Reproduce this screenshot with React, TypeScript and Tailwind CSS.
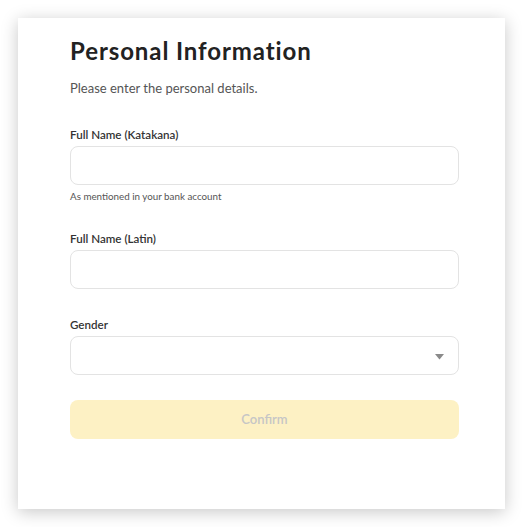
import React from "react";

function Field({ label, helper, select }: { label: string; helper?: string; select?: boolean }) {
  return (
    <div className="flex flex-col">
      <label className="text-[11.6px] leading-[16px] font-semibold text-[#333333] mb-[3px]">{label}</label>
      <div className="relative h-[39px] w-full rounded-[8px] border border-[#e3e3e3] bg-white">
        {select && (
          <svg className="absolute right-[14px] top-[17px]" width="9" height="6" viewBox="0 0 9 6">
            <path d="M0 0 L9 0 L4.5 5.5 Z" fill="#8a8a8a" />
          </svg>
        )}
      </div>
      {helper && (
        <div className="mt-[5px] text-[9.8px] leading-[12px] text-[#555555]">{helper}</div>
      )}
    </div>
  );
}

export default function App() {
  return (
    <div className="w-[525px] h-[527px] bg-white p-[18px]" style={{ fontFamily: "Lato, 'Open Sans', sans-serif" }}>
      <div className="w-[487px] h-[491px] bg-white shadow-[0_3px_16px_rgba(0,0,0,0.22)] pl-[52px] pr-[46px] pt-[17px] flex flex-col">
        <h1 className="text-[24px] leading-[32px] font-bold tracking-[0.9px] text-[#222222]">Personal Information</h1>
        <p className="mt-[11px] text-[13px] leading-[20px] text-[#555555]">Please enter the personal details.</p>
        <div className="mt-[29px]">
          <Field label="Full Name (Katakana)" helper="As mentioned in your bank account" />
        </div>
        <div className="mt-[29px]">
          <Field label="Full Name (Latin)" />
        </div>
        <div className="mt-[28px]">
          <Field label="Gender" select />
        </div>
        <button className="mt-[25px] h-[39px] w-full rounded-[8px] bg-[#fdf1c4] text-[13px] font-semibold text-[#c6c6c6]">
          Confirm
        </button>
      </div>
    </div>
  );
}
